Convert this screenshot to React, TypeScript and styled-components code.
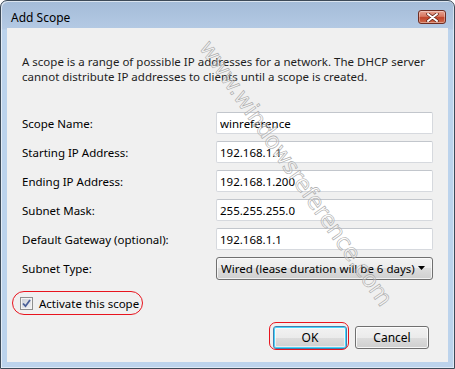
import React from 'react';
import styled, { createGlobalStyle } from 'styled-components';

const GlobalStyle = createGlobalStyle`
  html, body {
    margin: 0;
    padding: 0;
    background: #ffffff;
    overflow: hidden;
  }
  * {
    box-sizing: border-box;
  }
`;

const FONT = `"Noto Sans", "Open Sans", sans-serif`;

const fields = [
  { label: 'Scope Name:', value: 'winreference' },
  { label: 'Starting IP Address:', value: '192.168.1.1' },
  { label: 'Ending IP Address:', value: '192.168.1.200' },
  { label: 'Subnet Mask:', value: '255.255.255.0' },
  { label: 'Default Gateway (optional):', value: '192.168.1.1' },
];

function App() {
  return (
    <>
      <GlobalStyle />
      <Window>
        <TitleBar>
          <Title>Add Scope</Title>
          <CloseButton aria-label="Close">
            <svg width="13" height="9" viewBox="0 0 13 9">
              <path
                d="M2 1 L11 8 M11 1 L2 8"
                stroke="#5a1e14"
                strokeWidth="3.4"
                strokeLinecap="round"
              />
              <path
                d="M2 1 L11 8 M11 1 L2 8"
                stroke="#ffffff"
                strokeWidth="2"
                strokeLinecap="round"
              />
            </svg>
          </CloseButton>
        </TitleBar>
        <Client>
          <Description>
            A scope is a range of possible IP addresses for a network. The DHCP server
            <br />
            cannot distribute IP addresses to clients until a scope is created.
          </Description>
          <Form>
            {fields.map((f) => (
              <React.Fragment key={f.label}>
                <Label>{f.label}</Label>
                <TextBox defaultValue={f.value} />
              </React.Fragment>
            ))}
            <Label>Subnet Type:</Label>
            <Select>
              <span>Wired (lease duration will be 6 days)</span>
              <svg width="8" height="4" viewBox="0 0 8 4">
                <path d="M0 0 H7 L3.5 4 Z" fill="#000" />
              </svg>
            </Select>
          </Form>
          <CheckRow>
            <CheckBox>
              <svg width="9" height="9" viewBox="0 0 9 9">
                <path
                  d="M1 4.5 L3.5 7.2 L8 1"
                  stroke="#4a5f97"
                  strokeWidth="1.8"
                  fill="none"
                />
              </svg>
            </CheckBox>
            <span>Activate this scope</span>
          </CheckRow>
          <ButtonRow>
            <Button $focused $marked>
              OK
            </Button>
            <Button>Cancel</Button>
          </ButtonRow>
          <Watermark>www.windowsreference.com</Watermark>
        </Client>
      </Window>
    </>
  );
}

export default App;

const Window = styled.div`
  position: relative;
  width: 455px;
  height: 369px;
  display: flex;
  flex-direction: column;
  padding: 0 6px 6px 6px;
  border: 1px solid #3d4a58;
  border-radius: 7px 7px 0 0;
  background: linear-gradient(#a4bcd8 0px, #b4cae4 28px, #bcd3ec 29px, #bcd3ec 100%);
  box-shadow: inset 1px 1px 0 rgba(255, 255, 255, 0.6), inset -1px -1px 0 rgba(255, 255, 255, 0.5);
  font-family: ${FONT};
  font-size: 11.5px;
  color: #000;
`;

const TitleBar = styled.div`
  height: 27px;
  display: flex;
  align-items: flex-start;
  justify-content: space-between;
  padding: 0 2px 0 4px;
`;

const Title = styled.span`
  margin-top: 9px;
  font-size: 12px;
  line-height: 15px;
  color: #000;
`;

const CloseButton = styled.div`
  margin-top: 9px;
  width: 28px;
  height: 14px;
  display: flex;
  align-items: center;
  justify-content: center;
  border: 1px solid #6e2d22;
  border-radius: 3px;
  background: linear-gradient(#e8a493 0%, #d7775f 45%, #c0442a 55%, #cf6b4c 100%);
  box-shadow: inset 0 0 0 1px rgba(255, 255, 255, 0.35);
`;

const Client = styled.div`
  position: relative;
  flex: 1;
  display: flex;
  flex-direction: column;
  padding: 26px 19px 13px 15px;
  background: #f0f0f0;
  overflow: hidden;
`;

const Watermark = styled.div`
  position: absolute;
  left: 289px;
  top: 145px;
  transform: translate(-50%, -50%) rotate(55deg);
  font-family: "DejaVu Sans", sans-serif;
  font-size: 23px;
  letter-spacing: -0.4px;
  white-space: nowrap;
  color: rgba(255, 255, 255, 0.25);
  -webkit-text-stroke: 0.6px #a8a8a8;
  pointer-events: none;
`;

const Description = styled.p`
  position: relative;
  margin: 0;
  line-height: 15px;
  white-space: nowrap;
  color: #1e1e1e;
`;

const Form = styled.div`
  position: relative;
  margin-top: 28px;
  display: grid;
  grid-template-columns: 194px 217px;
  grid-auto-rows: 22px;
  row-gap: 7px;
  align-items: center;
`;

const Label = styled.span`
  line-height: 15px;
`;

const TextBox = styled.input`
  width: 217px;
  height: 22px;
  padding: 0 0 0 3px;
  border: 1px solid #d6d9de;
  border-top-color: #c2c6cc;
  border-radius: 2px;
  background: #ffffff;
  font-family: ${FONT};
  font-size: 11.5px;
  color: #000;
  outline: none;
`;

const Select = styled.div`
  height: 23px;
  display: flex;
  align-items: center;
  justify-content: space-between;
  padding: 0 6px 0 4px;
  border: 1px solid #707070;
  border-radius: 3px;
  background: linear-gradient(#f2f2f2 0%, #ebebeb 50%, #dddddd 50%, #cfcfcf 100%);
  box-shadow: inset 0 0 0 1px rgba(255, 255, 255, 0.7);
  white-space: nowrap;
`;

const CheckRow = styled.label`
  position: relative;
  align-self: flex-start;
  margin-top: 17px;
  margin-left: -2px;
  display: flex;
  align-items: center;
  gap: 6px;
  &::after {
    content: '';
    position: absolute;
    inset: -5px -4px -4px -8px;
    border: 1px solid #e8141e;
    border-radius: 12px;
  }
`;

const CheckBox = styled.span`
  width: 13px;
  height: 13px;
  display: flex;
  align-items: center;
  justify-content: center;
  border: 1px solid #8e8f8f;
  background: linear-gradient(135deg, #cbcfd5 0%, #f4f4f6 100%);
  box-shadow: inset 0 0 0 1px #f4f4f4;
`;

const ButtonRow = styled.div`
  margin-top: auto;
  display: flex;
  justify-content: flex-end;
  gap: 8px;
`;

const Button = styled.div<{ $focused?: boolean; $marked?: boolean }>`
  position: relative;
  width: 74px;
  height: 23px;
  display: flex;
  align-items: center;
  justify-content: center;
  border: 1px solid ${(p) => (p.$focused ? '#3c7fb1' : '#707070')};
  border-radius: 3px;
  background: linear-gradient(#f2f2f2 0%, #ebebeb 50%, #dddddd 50%, #cfcfcf 100%);
  box-shadow: ${(p) =>
    p.$focused
      ? 'inset 0 0 0 1px #48d4fa, inset 0 0 0 2px rgba(255,255,255,0.6)'
      : 'inset 0 0 0 1px rgba(255,255,255,0.8)'};
  font-size: 12px;
  &::after {
    content: '';
    display: ${(p) => (p.$marked ? 'block' : 'none')};
    position: absolute;
    inset: -5px -3px -2px -5px;
    border: 1px solid #e8141e;
    border-radius: 7px;
  }
`;
